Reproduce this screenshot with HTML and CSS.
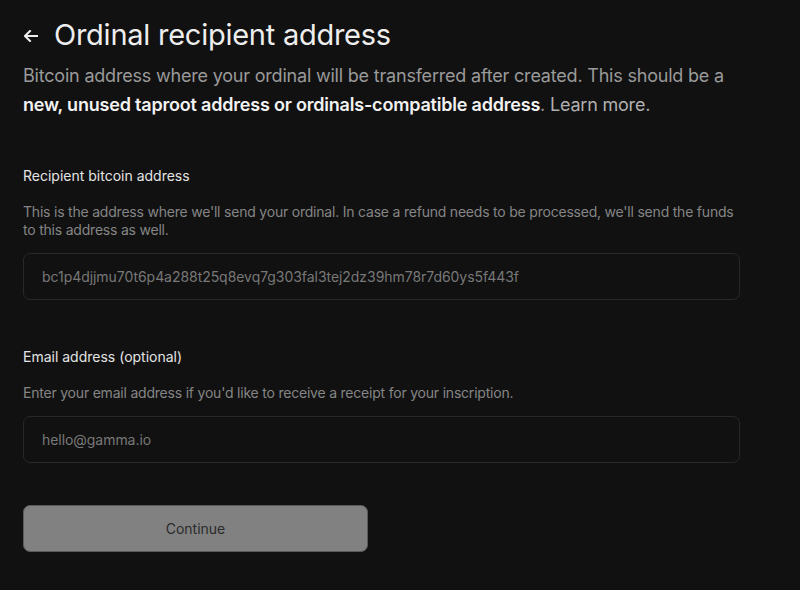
FILE: index.html
```html
<!DOCTYPE html>
<html lang="en">
<head>
<meta charset="utf-8">
<link rel="stylesheet" href="styles.css">
</head>
<body>
<main class="page">
  <header class="head">
    <h1 class="title">
      <svg class="back" viewBox="0 0 14 12" width="14" height="12" aria-hidden="true">
        <path d="M13 6H1.5M6 1L1 6l5 5" fill="none" stroke="#eee" stroke-width="2" stroke-linecap="square"/>
      </svg>
      <span>Ordinal recipient address</span>
    </h1>
    <p class="lead">Bitcoin address where your ordinal will be transferred after created. This should be a <strong>new, unused taproot address or ordinals-compatible address</strong>. <span class="more">Learn more.</span></p>
  </header>

  <section class="field first">
    <label class="label">Recipient bitcoin address</label>
    <p class="help">This is the address where we'll send your ordinal. In case a refund needs to be processed, we'll send the funds to this address as well.</p>
    <div class="input">bc1p4djjmu70t6p4a288t25q8evq7g303fal3tej2dz39hm78r7d60ys5f443f</div>
  </section>

  <section class="field second">
    <label class="label">Email address (optional)</label>
    <p class="help">Enter your email address if you'd like to receive a receipt for your inscription.</p>
    <div class="input">hello@gamma.io</div>
  </section>

  <button class="btn">Continue</button>
</main>
</body>
</html>
```

FILE: styles.css
```css
html, body {
  margin: 0;
  padding: 0;
  background: #111111;
}
body {
  font-family: Inter, "Noto Sans", sans-serif;
  color: #eeeeee;
}
.page {
  width: 717px;
  padding: 15px 0 0 23px;
  display: flex;
  flex-direction: column;
}
.title {
  margin: 0;
  display: flex;
  align-items: center;
  gap: 16px;
  font-size: 29px;
  font-weight: 400;
  line-height: 40px;
  color: #eeeeee;
  letter-spacing: -0.25px;
}
.back {
  margin-left: 1px;
  margin-top: 1px;
}
.lead {
  margin: 6px 0 0;
  font-size: 18px;
  line-height: 29px;
  color: #9a9a9a;
  letter-spacing: -0.2px;
}
.lead strong {
  color: #f2f2f2;
  font-weight: 600;
}
.lead .more {
  color: #b0b0b0;
}
.field {
  display: flex;
  flex-direction: column;
}
.field.first { margin-top: 47px; }
.field.second { margin-top: 47px; }
.label {
  font-size: 14px;
  line-height: 20px;
  color: #e4e4e4;
  font-weight: 400;
}
.help {
  margin: 17px 0 0;
  font-size: 14px;
  line-height: 18px;
  color: #858585;
  letter-spacing: -0.21px;
}
.input {
  margin-top: 14px;
  height: 45px;
  border: 1px solid #282828;
  border-radius: 7px;
  display: flex;
  align-items: center;
  padding: 0 18px;
  font-size: 14px;
  color: #787878;
  letter-spacing: -0.05px;
}
.btn {
  margin-top: 42px;
  width: 345px;
  height: 47px;
  border: 1px solid #5a5a5a;
  border-radius: 7px;
  background: #818181;
  color: #2b2b2b;
  font-family: Inter, "Noto Sans", sans-serif;
  font-size: 14px;
  padding: 0;
}
```
